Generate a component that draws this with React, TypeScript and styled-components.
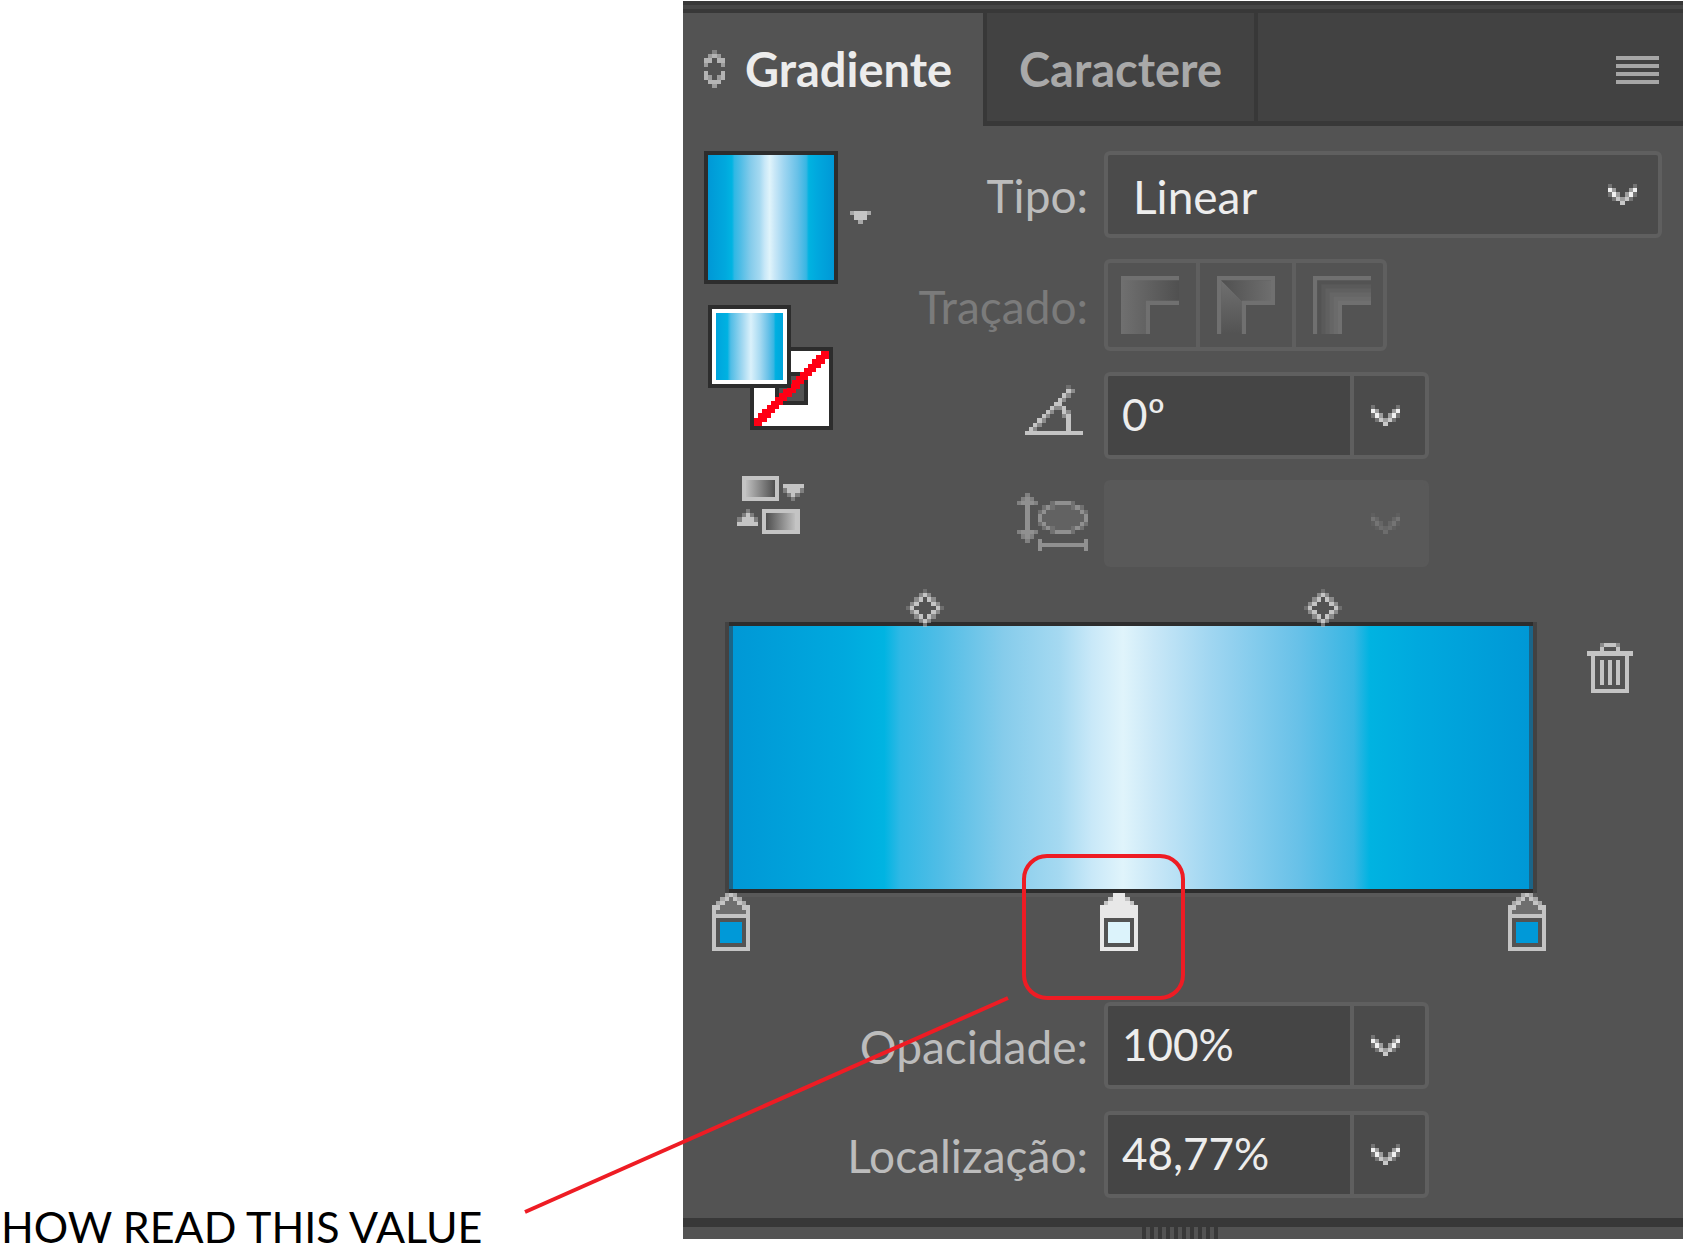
import React, { useState } from 'react';
import styled, { createGlobalStyle } from 'styled-components';

const color = {
  panel: '#535353',
  bar: '#424242',
  edge: '#383838',
  line: '#5f5f5f',
  field: '#454545',
  control: '#4b4b4b',
  disabled: '#595959',
  ink: '#c4c4c4',
  label: '#bcbcbc',
  muted: '#7b7b7b',
  value: '#ededed',
  frame: '#2d2d2d',
  mark: '#ee1c24',
};

const rampGradient = `linear-gradient(90deg,
  #0098d6 0%, #00a9de 14%, #00b4e2 19%, #2fb8e5 21%, #50bde6 26%, #86cceb 34%,
  #a5d9f1 41%, #c8e8f8 45%, #e0f4fb 49%, #c8e7f7 53%, #a0d6f1 60%, #68c1e8 71%,
  #38b6e3 78%, #00b3e1 80%, #00a9de 86%, #0098d6 100%)`;

const Global = createGlobalStyle`
  *, *::before, *::after { box-sizing: border-box; }
  body { margin: 0; background: #fff; }
  body, button, input, select { font-family: Lato, "Open Sans", sans-serif; }
  button { margin: 0; padding: 0; border: 0; background: none; color: inherit; cursor: pointer; }
`;

/* ---------- bitmap icons ---------- */

const UNIT = 25 / 6;
const alpha: Record<string, number> = { '1': 0.25, '2': 0.5, '3': 0.75, '4': 1 };

const Bitmap = styled.svg`
  display: block;
  flex: none;
`;

function PixelIcon({ rows, ink, fill }: { rows: string[]; ink: string; fill?: string }) {
  const w = rows[0].length;
  const h = rows.length;
  return (
    <Bitmap
      width={Math.round(w * UNIT)}
      height={Math.round(h * UNIT)}
      viewBox={`0 0 ${w} ${h}`}
      preserveAspectRatio="none"
      shapeRendering="crispEdges"
      aria-hidden="true"
    >
      {rows.flatMap((row, y) =>
        [...row].map((c, x) =>
          c === '.' ? null : (
            <rect
              key={`${x}-${y}`}
              x={x}
              y={y}
              width="1"
              height="1"
              fill={c === 'c' ? fill : ink}
              fillOpacity={c === 'c' ? 1 : alpha[c]}
            />
          )
        )
      )}
    </Bitmap>
  );
}

const chevron = ['1.....1', '42...24', '142.241', '.13231.', '...3...'];
const caretDown = ['34443', '.444.', '..3..'];
const collapse = ['..2..', '.343.', '44.44', '3...3', '.....', '4...4', '43.34', '.444.', '..3..'];
const diamond = [
  '....1....',
  '...242...',
  '..24.42..',
  '.24...42.',
  '14.....41',
  '.24...42.',
  '..24.42..',
  '...242...',
  '....2....',
];
const angle = [
  '..........1...',
  '..........42..',
  '.........42...',
  '........42....',
  '.......44.....',
  '......4224....',
  '.....42..42...',
  '....42...24...',
  '...42.....4...',
  '..42......4...',
  '.42.......4...',
  '44444444444444',
];
const aspect = [
  '..3..............',
  '.343.............',
  '34443...244442...',
  '..4...2421111242.',
  '..4..241111111142',
  '..4..411111111114',
  '..4..411111111114',
  '..4..241111111142',
  '..4...2421111242.',
  '34443...244442...',
  '.343.............',
  '..3..4..........4',
  '.....444444444444',
  '.....4..........4',
];
const trash = [
  '...24442...',
  '...4...4...',
  '44444444444',
  '.4.......4.',
  '.4.4.4.4.4.',
  '.4.4.4.4.4.',
  '.4.4.4.4.4.',
  '.4.4.4.4.4.',
  '.4.4.4.4.4.',
  '.4.4.4.4.4.',
  '.4.......4.',
  '.444444444.',
];
const stopBox = [
  '444444444',
  '4.......4',
  '4.ccccc.4',
  '4.ccccc.4',
  '4.ccccc.4',
  '4.ccccc.4',
  '4.ccccc.4',
  '4.......4',
  '444444444',
];
const stopIdle = ['...343...', '..34143..', '.3411143.', '441111144', '411111114', ...stopBox];
const stopActive = ['...444...', '..34443..', '.3444443.', '444444444', '444444444', ...stopBox];

/* ---------- page ---------- */

const Page = styled.main`
  position: relative;
  display: grid;
  grid-template-columns: 683px minmax(0, 1fr);
  padding: 1px 1px 0 0;
`;

const Caption = styled.p`
  align-self: end;
  margin: 0 0 0 1px;
  font-size: 43px;
  line-height: 56px;
  white-space: nowrap;
  color: #000;
`;

const Panel = styled.section`
  margin-bottom: 16px;
  background: ${color.panel};
`;

const TitleStrip = styled.div`
  height: 12px;
  background: #464646;
  border-top: 4px solid ${color.edge};
  border-bottom: 4px solid ${color.edge};
`;

const TabBar = styled.div`
  display: flex;
  height: 113px;
  background: ${color.bar};
  border-bottom: 5px solid ${color.edge};
`;

const Tab = styled.button<{ $active?: boolean }>`
  display: flex;
  align-items: center;
  gap: 20px;
  flex: 0 0 ${p => (p.$active ? 300 : 275)}px;
  margin-bottom: ${p => (p.$active ? -5 : 0)}px;
  padding: 3px ${p => (p.$active ? 21 : 32)}px ${p => (p.$active ? 5 : 0)}px;
  background: ${p => (p.$active ? color.panel : 'transparent')};
  border: solid ${color.edge};
  border-width: 0 ${p => (p.$active ? 0 : 4)}px;
  color: ${p => (p.$active ? '#ececec' : '#a9a9a9')};
  font-size: 47px;
  font-weight: 700;
  line-height: 56px;
`;

const MenuButton = styled.button`
  display: grid;
  gap: 4px;
  align-self: center;
  width: 43px;
  margin: 0 24px 0 auto;
  padding-top: 5px;
`;

const MenuLine = styled.span`
  height: 4px;
  background: #a6a6a6;
`;

/* ---------- swatches ---------- */

const Top = styled.div`
  display: flex;
  padding: 25px 21px 0;
`;

const Swatches = styled.div`
  display: flex;
  flex-direction: column;
  flex: 0 0 167px;
`;

const PreviewRow = styled.div`
  display: flex;
  align-items: center;
  gap: 12px;
  margin-bottom: 21px;
`;

const Preview = styled.button`
  width: 134px;
  height: 133px;
  border: 4px solid ${color.frame};
  background: ${rampGradient};
`;

const PresetButton = styled.button`
  width: 21px;
`;

const FillStroke = styled.div`
  position: relative;
  width: 125px;
  height: 125px;
  margin: 0 0 46px 4px;
`;

const FillSwatch = styled.button`
  position: absolute;
  top: 0;
  left: 0;
  width: 83px;
  height: 83px;
  border: 4px solid ${color.frame};
  padding: 4px;
  background: #fff;
`;

const FillColor = styled.span`
  display: block;
  height: 67px;
  background: linear-gradient(90deg, #00a4dc, #00b2e2 17%, #50bde6 22%, #a5d9f1 40%,
    #daf1fb 52%, #a5d9f1 66%, #68c1e8 78%, #38b6e3 86%, #00b0e1 89%, #00a6dd);
`;

const StrokeSwatch = styled.button`
  position: absolute;
  right: 0;
  bottom: 0;
  width: 83px;
  height: 83px;
`;

const SwapButton = styled.button`
  width: 67px;
  margin-left: 33px;
`;

function NoStroke() {
  return (
    <Bitmap width="83" height="83" viewBox="0 0 20 20" shapeRendering="crispEdges" aria-hidden="true">
      <rect width="20" height="20" fill={color.frame} />
      <rect x="1" y="1" width="18" height="18" fill="#fff" />
      <rect x="6" y="6" width="8" height="8" fill={color.frame} />
      <rect x="7" y="7" width="6" height="6" fill={color.panel} />
      {Array.from({ length: 18 }, (_, i) => {
        const from = Math.max(1, 17 - i);
        const to = Math.min(19, 20 - i);
        return <rect key={i} x={from} y={i + 1} width={to - from} height="1" fill="#ff0014" />;
      })}
    </Bitmap>
  );
}

function SwapIcon() {
  return (
    <Bitmap width="67" height="58" viewBox="0 0 16 14" shapeRendering="crispEdges" aria-hidden="true">
      <defs>
        <linearGradient id="swapA">
          <stop offset="0" stopColor="#c0c0c0" />
          <stop offset="1" stopColor="#505050" />
        </linearGradient>
        <linearGradient id="swapB">
          <stop offset="0" stopColor="#505050" />
          <stop offset="1" stopColor="#c0c0c0" />
        </linearGradient>
      </defs>
      <g fill={color.ink}>
        <rect x="1" width="9" height="6" />
        <rect x="6" y="8" width="9" height="6" />
        <path d="M11 2h5v1h-5zM12 3h3v1h-3zM13 4h1v1h-1zM2 9h1v1H2zM1 10h3v1H1zM0 11h5v1H0z" />
        <path
          fillOpacity=".4"
          d="M11 3h1v1h-1zM15 3h1v1h-1zM12 4h1v1h-1zM14 4h1v1h-1zM13 5h1v1h-1zM2 8h1v1H2zM1 9h1v1H1zM3 9h1v1H3zM0 10h1v1H0zM4 10h1v1H4z"
        />
      </g>
      <rect x="2" y="1" width="7" height="4" fill="url(#swapA)" />
      <rect x="7" y="9" width="7" height="4" fill="url(#swapB)" />
    </Bitmap>
  );
}

/* ---------- form ---------- */

const Form = styled.div<{ $labels: number; $gap: number }>`
  flex: 1;
  display: grid;
  grid-template-columns: ${p => p.$labels}px minmax(0, 1fr);
  column-gap: 16px;
  row-gap: ${p => p.$gap}px;
  align-items: center;
`;

const Label = styled.label<{ $muted?: boolean }>`
  justify-self: end;
  padding-top: 3px;
  color: ${p => (p.$muted ? color.muted : color.label)};
  font-size: 46px;
  line-height: 56px;
  white-space: nowrap;
`;

const IconLabel = styled.label<{ $inset?: number; $drop?: number }>`
  justify-self: end;
  padding: 0 ${p => p.$inset ?? 0}px ${p => p.$drop ?? 0}px 0;
`;

const SelectBox = styled.div`
  position: relative;
  height: 87px;
`;

const Select = styled.select`
  appearance: none;
  width: 100%;
  height: 100%;
  padding: 3px 80px 0 25px;
  border: 4px solid ${color.line};
  border-radius: 6px;
  background: ${color.control};
  color: ${color.value};
  font-size: 46px;
`;

const SelectMark = styled.span`
  position: absolute;
  top: 33px;
  right: 25px;
  pointer-events: none;
`;

const Segments = styled.div`
  display: flex;
  justify-self: start;
  height: 92px;
  border: 4px solid ${color.line};
  border-radius: 6px;
`;

const Segment = styled.button`
  padding: 0 17px 0 13px;
  & + & {
    padding: 0 17px;
    border-left: 4px solid ${color.line};
  }
  & + & + & {
    padding-right: 12px;
  }
`;

const Combo = styled.div<{ $disabled?: boolean }>`
  display: flex;
  width: 325px;
  height: 87px;
  overflow: hidden;
  border: 4px solid ${p => (p.$disabled ? color.disabled : color.line)};
  border-radius: 6px;
  background: ${p => (p.$disabled ? color.disabled : color.control)};
`;

const ComboInput = styled.input`
  flex: 1;
  min-width: 0;
  border: 0;
  border-right: 4px solid ${color.line};
  border-radius: 0;
  padding: 0 8px 4px 14px;
  background: ${color.field};
  color: ${color.value};
  font-size: 44px;
  &:disabled {
    background: transparent;
    border-color: transparent;
  }
`;

const ComboButton = styled.button`
  display: grid;
  place-items: center;
  flex: 0 0 71px;
  padding-right: 8px;
`;

function ComboField({ id, value, onChange, disabled, name }: {
  id: string;
  name: string;
  value: string;
  onChange?: (v: string) => void;
  disabled?: boolean;
}) {
  return (
    <Combo $disabled={disabled}>
      <ComboInput
        id={id}
        value={value}
        disabled={disabled}
        readOnly={!onChange}
        onChange={e => onChange?.(e.target.value)}
      />
      <ComboButton type="button" disabled={disabled} aria-label={name}>
        <PixelIcon rows={chevron} ink={disabled ? '#747474' : '#f0f0f0'} />
      </ComboButton>
    </Combo>
  );
}

const edgeInk = '#707070';

function StrokeWithin() {
  return (
    <Bitmap width="58" height="58" viewBox="0 0 14 14" aria-hidden="true">
      <defs>
        <linearGradient id="within">
          <stop offset="0" stopColor={edgeInk} />
          <stop offset="1" stopColor="#505050" />
        </linearGradient>
      </defs>
      <path d="M0 0H14V7H7V14H0Z" fill="url(#within)" />
      <path d="M0 0H14V1H0ZM6 6H14V7H7V14H6Z" fill={edgeInk} />
    </Bitmap>
  );
}

function StrokeAlong() {
  return (
    <Bitmap width="58" height="58" viewBox="0 0 14 14" aria-hidden="true">
      <defs>
        <linearGradient id="alongH">
          <stop offset="0" stopColor="#505050" />
          <stop offset="1" stopColor={edgeInk} />
        </linearGradient>
        <linearGradient id="alongV" x2="0" y2="1">
          <stop offset="0" stopColor={edgeInk} />
          <stop offset="1" stopColor="#535353" />
        </linearGradient>
      </defs>
      <path d="M1 1L7 7V14H1Z" fill="url(#alongV)" />
      <path d="M1 1H14V7H7Z" fill="url(#alongH)" />
      <path d="M0 0H14V7H7V14H6V6H13V1H1V14H0Z" fill={edgeInk} />
    </Bitmap>
  );
}

function StrokeAcross() {
  return (
    <Bitmap width="58" height="58" viewBox="0 0 14 14" aria-hidden="true">
      <path d="M0 0H14V7H7V14H0Z" fill={edgeInk} />
      {['#535353', '#5a5a5a', '#606060', '#666', '#6b6b6b', edgeInk].map((shade, i) => (
        <path key={shade} d={`M${i + 1} ${i + 1}H14V7H7V14H${i + 1}Z`} fill={shade} />
      ))}
    </Bitmap>
  );
}

/* ---------- gradient ramp ---------- */

const RampRow = styled.div`
  display: flex;
  gap: 50px;
  padding: 22px 50px 0 42px;
`;

const RampColumn = styled.div`
  flex: 1;
`;

const Rail = styled.div<{ $height: number }>`
  position: relative;
  height: ${p => p.$height}px;
  margin: 0 10px 0 6px;
`;

const Handle = styled.button`
  position: absolute;
  top: 0;
  z-index: 1;
  transform: translateX(-50%);
`;

const Ramp = styled.div`
  height: 271px;
  padding: 0 4px;
  background: #424242;
  box-shadow: 0 4px 0 #595959;
`;

const RampTint = styled.div`
  height: 100%;
  padding: 0 4px;
  border: solid ${color.frame};
  border-width: 4px 0;
  background: #1b6588;
`;

const RampColor = styled.div`
  height: 100%;
  background: ${rampGradient};
`;

const TrashButton = styled.button`
  align-self: flex-start;
  margin-top: 54px;
`;

const Values = styled.div`
  display: flex;
  padding: 50px 21px 20px 0;
`;

const Footer = styled.div`
  display: flex;
  justify-content: center;
  gap: 4px;
  height: 21px;
  border-top: 9px solid ${color.edge};
  padding-right: 6px;
`;

const Grip = styled.span`
  width: 4px;
  background: ${color.edge};
`;

const Annotation = styled.svg`
  position: absolute;
  top: 0;
  left: 0;
  z-index: 2;
  pointer-events: none;
`;

export default function App() {
  const [type, setType] = useState('Linear');
  const [rotation, setRotation] = useState('0º');
  const [opacity, setOpacity] = useState('100%');
  const [location, setLocation] = useState('48,77%');

  const stops = [
    { at: 0, fill: '#0099d8' },
    { at: parseFloat(location.replace(',', '.')) || 0, fill: '#dcf3fb', active: true },
    { at: 100, fill: '#0099d8' },
  ];
  const midpoints = [(stops[0].at + stops[1].at) / 2, (stops[1].at + stops[2].at) / 2];

  return (
    <>
      <Global />
      <Page>
        <Caption>HOW READ THIS VALUE</Caption>
        <Panel>
          <TitleStrip />
          <TabBar role="tablist">
            <Tab $active type="button" role="tab" aria-selected="true">
              <PixelIcon rows={collapse} ink="#b4b4b4" />
              Gradiente
            </Tab>
            <Tab type="button" role="tab" aria-selected="false">
              Caractere
            </Tab>
            <MenuButton type="button" aria-label="Menu">
              {[0, 1, 2, 3].map(i => (
                <MenuLine key={i} />
              ))}
            </MenuButton>
          </TabBar>

          <Top>
            <Swatches>
              <PreviewRow>
                <Preview type="button" aria-label="Gradiente" />
                <PresetButton type="button" aria-label="Predefinições">
                  <PixelIcon rows={caretDown} ink={color.ink} />
                </PresetButton>
              </PreviewRow>
              <FillStroke>
                <StrokeSwatch type="button" aria-label="Traçado">
                  <NoStroke />
                </StrokeSwatch>
                <FillSwatch type="button" aria-label="Preenchimento">
                  <FillColor />
                </FillSwatch>
              </FillStroke>
              <SwapButton type="button" aria-label="Inverter gradiente">
                <SwapIcon />
              </SwapButton>
            </Swatches>

            <Form $labels={217} $gap={21}>
              <Label htmlFor="type">Tipo:</Label>
              <SelectBox>
                <Select id="type" value={type} onChange={e => setType(e.target.value)}>
                  <option>Linear</option>
                  <option>Radial</option>
                </Select>
                <SelectMark>
                  <PixelIcon rows={chevron} ink="#f0f0f0" />
                </SelectMark>
              </SelectBox>

              <Label as="span" $muted id="strokeLabel">
                Traçado:
              </Label>
              <Segments role="group" aria-labelledby="strokeLabel">
                <Segment type="button" disabled aria-label="No traçado">
                  <StrokeWithin />
                </Segment>
                <Segment type="button" disabled aria-label="Ao longo do traçado">
                  <StrokeAlong />
                </Segment>
                <Segment type="button" disabled aria-label="Através do traçado">
                  <StrokeAcross />
                </Segment>
              </Segments>

              <IconLabel htmlFor="angle" aria-label="Ângulo" $inset={5} $drop={12}>
                <PixelIcon rows={angle} ink={color.ink} />
              </IconLabel>
              <ComboField id="angle" name="Ângulos" value={rotation} onChange={setRotation} />

              <IconLabel htmlFor="aspect" aria-label="Proporção" $drop={4}>
                <PixelIcon rows={aspect} ink="#909090" />
              </IconLabel>
              <ComboField id="aspect" name="Proporções" value="" disabled />
            </Form>
          </Top>

          <RampRow>
            <RampColumn>
              <Rail $height={33}>
                {midpoints.map((at, i) => (
                  <Handle key={i} type="button" aria-label="Ponto médio" style={{ left: `${at}%` }}>
                    <PixelIcon rows={diamond} ink={color.ink} />
                  </Handle>
                ))}
              </Rail>
              <Ramp>
                <RampTint>
                  <RampColor />
                </RampTint>
              </Ramp>
              <Rail $height={59}>
                {stops.map((stop, i) => (
                  <Handle key={i} type="button" aria-label="Parada de cor" style={{ left: `${stop.at}%` }}>
                    <PixelIcon
                      rows={stop.active ? stopActive : stopIdle}
                      ink={stop.active ? '#e8e8e8' : color.ink}
                      fill={stop.fill}
                    />
                  </Handle>
                ))}
              </Rail>
            </RampColumn>
            <TrashButton type="button" aria-label="Excluir parada">
              <PixelIcon rows={trash} ink={color.ink} />
            </TrashButton>
          </RampRow>

          <Values>
            <Form $labels={405} $gap={22}>
              <Label htmlFor="opacity">Opacidade:</Label>
              <ComboField id="opacity" name="Opacidades" value={opacity} onChange={setOpacity} />
              <Label htmlFor="location">Localização:</Label>
              <ComboField id="location" name="Localizações" value={location} onChange={setLocation} />
            </Form>
          </Values>

          <Footer>
            {Array.from({ length: 10 }, (_, i) => (
              <Grip key={i} />
            ))}
          </Footer>
        </Panel>

        <Annotation width="1200" height="1230" viewBox="0 0 1200 1230" aria-hidden="true">
          <g fill="none" stroke={color.mark} strokeWidth="4">
            <rect x="1024" y="856" width="159" height="142" rx="23" />
            <path d="M525 1212L1008 998" />
          </g>
        </Annotation>
      </Page>
    </>
  );
}
